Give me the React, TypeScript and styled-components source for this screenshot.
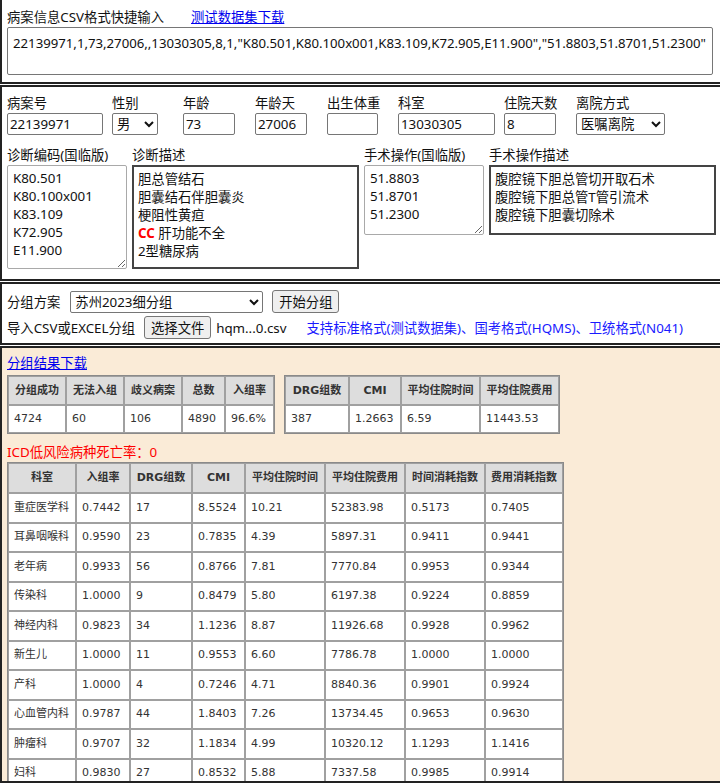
import React from 'react';
import styled, { createGlobalStyle } from 'styled-components';

const GlobalStyle = createGlobalStyle`
  html, body {
    margin: 0;
    padding: 0;
    height: 100%;
    overflow: hidden;
  }
  body {
    font-family: "Noto Sans", "Noto Sans CJK SC", sans-serif;
    font-size: 13.33px;
    color: #111;
    background: #fff;
  }
  #root {
    height: 100%;
  }
`;

const csvLine =
  '22139971,1,73,27006,,13030305,8,1,"K80.501,K80.100x001,K83.109,K72.905,E11.900","51.8803,51.8701,51.2300"';

const summaryA = [
  { head: '分组成功', value: '4724', w: 58 },
  { head: '无法入组', value: '60', w: 58 },
  { head: '歧义病案', value: '106', w: 58 },
  { head: '总数', value: '4890', w: 43 },
  { head: '入组率', value: '96.6%', w: 49 },
];

const summaryB = [
  { head: 'DRG组数', value: '387', w: 64 },
  { head: 'CMI', value: '1.2663', w: 52 },
  { head: '平均住院时间', value: '6.59', w: 79 },
  { head: '平均住院费用', value: '11443.53', w: 79 },
];

const deptHeads = [
  { head: '科室', w: 68 },
  { head: '入组率', w: 54 },
  { head: 'DRG组数', w: 62 },
  { head: 'CMI', w: 53 },
  { head: '平均住院时间', w: 80 },
  { head: '平均住院费用', w: 80 },
  { head: '时间消耗指数', w: 80 },
  { head: '费用消耗指数', w: 77 },
];

const deptRows = [
  ['重症医学科', '0.7442', '17', '8.5524', '10.21', '52383.98', '0.5173', '0.7405'],
  ['耳鼻咽喉科', '0.9590', '23', '0.7835', '4.39', '5897.31', '0.9411', '0.9441'],
  ['老年病', '0.9933', '56', '0.8766', '7.81', '7770.84', '0.9953', '0.9344'],
  ['传染科', '1.0000', '9', '0.8479', '5.80', '6197.38', '0.9224', '0.8859'],
  ['神经内科', '0.9823', '34', '1.1236', '8.87', '11926.68', '0.9928', '0.9962'],
  ['新生儿', '1.0000', '11', '0.9553', '6.60', '7786.78', '1.0000', '1.0000'],
  ['产科', '1.0000', '4', '0.7246', '4.71', '8840.36', '0.9901', '0.9924'],
  ['心血管内科', '0.9787', '44', '1.8403', '7.26', '13734.45', '0.9653', '0.9630'],
  ['肿瘤科', '0.9707', '32', '1.1834', '4.99', '10320.12', '1.1293', '1.1416'],
  ['妇科', '0.9830', '27', '0.8532', '5.88', '7337.58', '0.9985', '0.9914'],
];

const App: React.FC = () => {
  return (
    <Page>
      <GlobalStyle />

      {/* 快捷输入 */}
      <Section $noTop $pad="8px 0 7px 5px">
        <HeadRow>
          <span>病案信息CSV格式快捷输入</span>
          <Link href="#">测试数据集下载</Link>
        </HeadRow>
        <CsvArea defaultValue={csvLine} spellCheck={false} />
      </Section>

      {/* 病案基本信息 */}
      <Section $pad="7px 0 10px 5px">
        <FieldRow>
          <Field $w={105}>
            <Label>病案号</Label>
            <TextInput $w={96} defaultValue="22139971" />
          </Field>
          <Field $w={71}>
            <Label>性别</Label>
            <Select $w={46} defaultValue="1">
              <option value="1">男</option>
              <option value="2">女</option>
            </Select>
          </Field>
          <Field $w={72}>
            <Label>年龄</Label>
            <TextInput $w={52} defaultValue="73" />
          </Field>
          <Field $w={72}>
            <Label>年龄天</Label>
            <TextInput $w={52} defaultValue="27006" />
          </Field>
          <Field $w={71}>
            <Label>出生体重</Label>
            <TextInput $w={51} defaultValue="" />
          </Field>
          <Field $w={106}>
            <Label>科室</Label>
            <TextInput $w={97} defaultValue="13030305" />
          </Field>
          <Field $w={72}>
            <Label>住院天数</Label>
            <TextInput $w={52} defaultValue="8" />
          </Field>
          <Field $w={100}>
            <Label>离院方式</Label>
            <Select $w={89} defaultValue="1">
              <option value="1">医嘱离院</option>
              <option value="2">医嘱转院</option>
            </Select>
          </Field>
        </FieldRow>

        <BoxRow>
          <Field>
            <Label>诊断编码(国临版)</Label>
            <CodeArea
              $h={104}
              spellCheck={false}
              defaultValue={'K80.501\nK80.100x001\nK83.109\nK72.905\nE11.900'}
            />
          </Field>
          <Field>
            <Label>诊断描述</Label>
            <DescBox $h={104}>
              <div>胆总管结石</div>
              <div>胆囊结石伴胆囊炎</div>
              <div>梗阻性黄疸</div>
              <div>
                <CcTag>CC</CcTag> 肝功能不全
              </div>
              <div>2型糖尿病</div>
            </DescBox>
          </Field>
          <Field>
            <Label>手术操作(国临版)</Label>
            <CodeArea
              $h={70}
              spellCheck={false}
              defaultValue={'51.8803\n51.8701\n51.2300'}
            />
          </Field>
          <Field>
            <Label>手术操作描述</Label>
            <DescBox $h={70}>
              <div>腹腔镜下胆总管切开取石术</div>
              <div>腹腔镜下胆总管T管引流术</div>
              <div>腹腔镜下胆囊切除术</div>
            </DescBox>
          </Field>
        </BoxRow>
      </Section>

      {/* 分组方案 */}
      <Section $pad="6px 0 4px 5px">
        <ToolRow>
          <span>分组方案</span>
          <Select $w={193} $ml={10} defaultValue="sz2023">
            <option value="sz2023">苏州2023细分组</option>
            <option value="chs">CHS-DRG 1.1</option>
          </Select>
          <Button $ml={9}>开始分组</Button>
        </ToolRow>
        <ToolRow $mt={3}>
          <span>导入CSV或EXCEL分组</span>
          <Button $ml={9}>选择文件</Button>
          <FileName>hqm...0.csv</FileName>
          <PlainLink href="#">支持标准格式(测试数据集)、国考格式(HQMS)、卫统格式(N041)</PlainLink>
        </ToolRow>
      </Section>

      {/* 分组结果 */}
      <Section $bg="#faebd7" $pad="6px 0 0 5px" $grow>
        <HeadRow>
          <Link href="#">分组结果下载</Link>
        </HeadRow>
        <TablesRow>
          <SummaryTable cols={summaryA} />
          <SummaryTable cols={summaryB} />
        </TablesRow>
        <Warning>ICD低风险病种死亡率：0</Warning>
        <Table $rowH={29.5} $headH={30}>
          <colgroup>
            {deptHeads.map((c) => (
              <col key={c.head} style={{ width: c.w }} />
            ))}
          </colgroup>
          <thead>
            <tr>
              {deptHeads.map((c) => (
                <th key={c.head}>{c.head}</th>
              ))}
            </tr>
          </thead>
          <tbody>
            {deptRows.map((row) => (
              <tr key={row[0]}>
                {row.map((cell, i) => (
                  <td key={i}>{cell}</td>
                ))}
              </tr>
            ))}
          </tbody>
        </Table>
      </Section>
    </Page>
  );
};

interface SummaryProps {
  cols: { head: string; value: string; w: number }[];
}

const SummaryTable: React.FC<SummaryProps> = ({ cols }) => (
  <Table $rowH={28} $headH={29}>
    <colgroup>
      {cols.map((c) => (
        <col key={c.head} style={{ width: c.w }} />
      ))}
    </colgroup>
    <thead>
      <tr>
        {cols.map((c) => (
          <th key={c.head}>{c.head}</th>
        ))}
      </tr>
    </thead>
    <tbody>
      <tr>
        {cols.map((c) => (
          <td key={c.head}>{c.value}</td>
        ))}
      </tr>
    </tbody>
  </Table>
);

export default App;

const Page = styled.div`
  height: 100%;
  display: flex;
  flex-direction: column;
  gap: 1px;
`;

const Section = styled.div<{ $bg?: string; $pad: string; $noTop?: boolean; $grow?: boolean }>`
  border: 2px solid #222;
  border-right: none;
  ${(p) => (p.$noTop ? 'border-top: none;' : '')}
  background: ${(p) => p.$bg || '#fff'};
  padding: ${(p) => p.$pad};
  flex: ${(p) => (p.$grow ? '1 1 auto' : '0 0 auto')};
  overflow: hidden;
`;

const HeadRow = styled.div`
  display: flex;
  align-items: center;
  gap: 27px;
  height: 18px;
  line-height: 18px;
`;

const Link = styled.a`
  color: #0000ee;
  text-decoration: underline;
`;

const PlainLink = styled.a`
  color: #1a1aff;
  text-decoration: none;
  margin-left: 20px;
`;

const CsvArea = styled.textarea`
  display: block;
  box-sizing: border-box;
  margin-top: 1px;
  width: 706px;
  height: 48px;
  padding: 6px 5px 4px;
  border: 1px solid #767676;
  border-radius: 2px;
  resize: none;
  font-family: "Noto Sans", "Noto Sans CJK SC", sans-serif;
  font-size: 13.2px;
  line-height: 18px;
  color: #111;
  white-space: nowrap;
  overflow: hidden;
`;

const FieldRow = styled.div`
  display: flex;
  align-items: flex-start;
`;

const Field = styled.div<{ $w?: number }>`
  display: flex;
  flex-direction: column;
  ${(p) => (p.$w ? `width: ${p.$w}px;` : '')}
  flex: 0 0 auto;
`;

const Label = styled.div`
  height: 18px;
  line-height: 18px;
  margin-bottom: 1px;
  white-space: nowrap;
`;

const TextInput = styled.input<{ $w: number }>`
  box-sizing: border-box;
  width: ${(p) => p.$w}px;
  height: 22px;
  margin: 0;
  padding: 1px 2px;
  border: 1px solid #767676;
  border-radius: 2px;
  font-family: "Noto Sans", "Noto Sans CJK SC", sans-serif;
  font-size: 13.33px;
  color: #111;
`;

const Select = styled.select<{ $w: number; $ml?: number }>`
  box-sizing: border-box;
  width: ${(p) => p.$w}px;
  height: 22px;
  margin: 0 0 0 ${(p) => p.$ml || 0}px;
  border: 1px solid #767676;
  border-radius: 2px;
  background: #fff;
  font-family: "Noto Sans", "Noto Sans CJK SC", sans-serif;
  font-size: 13.33px;
  color: #111;
`;

const BoxRow = styled.div`
  display: flex;
  align-items: flex-start;
  gap: 5px;
  margin-top: 11px;
`;

const CodeArea = styled.textarea<{ $h: number }>`
  display: block;
  box-sizing: border-box;
  width: 120px;
  height: ${(p) => p.$h}px;
  margin: 0;
  padding: 3px 5px;
  border: 1px solid #a9a9a9;
  border-radius: 2px;
  font-family: "Noto Sans", "Noto Sans CJK SC", sans-serif;
  font-size: 13.33px;
  line-height: 18px;
  color: #111;
  overflow: hidden;
`;

const DescBox = styled.div<{ $h: number }>`
  box-sizing: border-box;
  width: 227px;
  height: ${(p) => p.$h}px;
  padding: 3px 4px;
  border: 2px solid #444;
  line-height: 18px;
  white-space: nowrap;
`;

const CcTag = styled.span`
  color: #f00;
  font-weight: bold;
`;

const ToolRow = styled.div<{ $mt?: number }>`
  display: flex;
  align-items: center;
  height: 23px;
  margin-top: ${(p) => p.$mt || 0}px;
  white-space: nowrap;
`;

const Button = styled.button<{ $ml?: number }>`
  box-sizing: border-box;
  width: 67px;
  height: 23px;
  margin: 0 0 0 ${(p) => p.$ml || 0}px;
  padding: 0;
  border: 1px solid #767676;
  border-radius: 3px;
  background: #efefef;
  font-family: "Noto Sans", "Noto Sans CJK SC", sans-serif;
  font-size: 13.33px;
  color: #111;
`;

const FileName = styled.span`
  margin-left: 5px;
`;

const TablesRow = styled.div`
  display: flex;
  align-items: flex-start;
  gap: 9px;
  margin-top: 3px;
`;

const Warning = styled.div`
  color: #f00;
  height: 18px;
  line-height: 18px;
  margin-top: 9px;
  margin-bottom: 1px;
`;

const Table = styled.table<{ $rowH: number; $headH: number }>`
  border-collapse: separate;
  border-spacing: 0;
  table-layout: fixed;
  border: 1px solid #8a8a8a;
  background: #fff;
  font-family: "DejaVu Sans", "Noto Sans CJK SC", sans-serif;
  font-size: 11px;
  color: #333;

  th,
  td {
    border: 1px solid #a0a0a0;
    padding: 0 5px;
    line-height: 14px;
    white-space: nowrap;
    overflow: hidden;
  }

  thead tr {
    height: ${(p) => p.$headH}px;
  }

  tbody tr {
    height: ${(p) => p.$rowH}px;
  }

  th {
    background: #dddddd;
    font-weight: bold;
    text-align: center;
  }

  td {
    text-align: left;
  }
`;
